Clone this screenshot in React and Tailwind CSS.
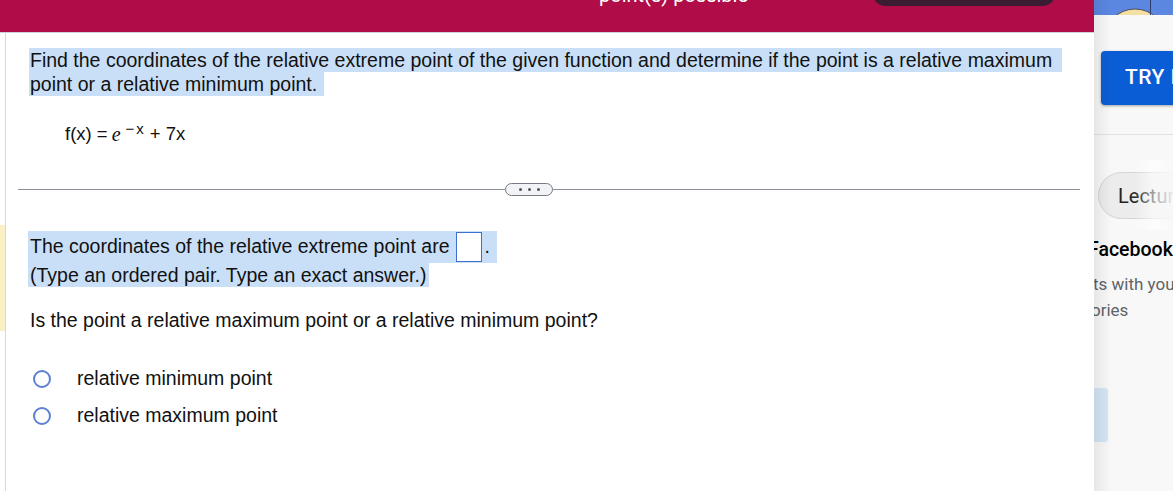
import React from "react";

const sans = { fontFamily: '"Liberation Sans", Arial, sans-serif' };
const roboto = { fontFamily: 'Roboto, "Liberation Sans", sans-serif' };

function Radio({ label }) {
  return (
    <div className="flex items-center h-[30px]">
      <span className="ml-[4px] w-[18px] h-[18px] rounded-full border-2 border-[#5d7fd3] bg-white shrink-0" />
      <span className="ml-[26px] text-[19.5px] text-[#111]">{label}</span>
    </div>
  );
}

export default function App() {
  return (
    <div className="flex w-[1173px] h-[491px] overflow-hidden bg-white" style={sans}>
      {/* main area */}
      <div className="w-[1094px] shrink-0 flex flex-col">
        <header className="h-[32px] bg-[#b00c48] flex items-start shrink-0 overflow-hidden">
          <span className="ml-[599px] -mt-[15px] text-[20px] leading-[20px] text-white whitespace-nowrap" style={roboto}>
            point(s) possible
          </span>
          <span className="ml-[124px] -mt-[24px] w-[184px] h-[30px] rounded-[14px] bg-[#3a1c33] shrink-0" />
        </header>
        <div className="h-px bg-[#cdd3de]" />
        <div className="flex-1 flex">
          {/* left gutter */}
          <div className="w-[5px] flex flex-col">
            <div className="h-[192px]" />
            <div className="h-[106px] bg-[#fbefc6]" />
          </div>
          <div className="w-px bg-[#d5d9e2]" />
          <div className="flex-1 flex flex-col text-[#111]">
            <div className="mt-[15px] ml-[23px] text-[19.5px] leading-[24px]">
              <div className="w-fit bg-[#c9dff7] pl-px pr-[10px] whitespace-nowrap">
                Find the coordinates of the relative extreme point of the given function and determine if the point is a relative maximum
              </div>
              <div className="w-fit bg-[#c9dff7] pl-px pr-[7px]">point or a relative minimum point.</div>
            </div>
            <div className="mt-[24px] ml-[59px] h-[26px] flex items-end text-[18.5px] leading-[24px]">
              <span>f(x) = </span>
              <span className="ml-[4px] italic text-[20px]" style={{ fontFamily: '"Liberation Serif", serif' }}>e</span>
              <span className="ml-[5px] mb-[10px] text-[15px] leading-[15px] flex gap-[2px]">
                <span>−</span>
                <span>x</span>
              </span>
              <span className="ml-[6px]">+ 7x</span>
            </div>
            <div className="mt-[37px] ml-[12px] w-[1062px] h-[12px] flex items-center">
              <div className="w-[487px] h-px bg-[#8a8f99]" />
              <div className="w-[48px] h-[13px] rounded-full border-[1.5px] border-[#767b85] bg-[#f1f3f6] flex items-center justify-center gap-[6px]">
                <span className="w-[3px] h-[3px] rounded-full bg-[#555]" />
                <span className="w-[3px] h-[3px] rounded-full bg-[#555]" />
                <span className="w-[3px] h-[3px] rounded-full bg-[#555]" />
              </div>
              <div className="flex-1 h-px bg-[#8a8f99]" />
            </div>
            <div className="mt-[36px] ml-[22px] text-[19.5px]">
              <div className="w-fit h-[32px] bg-[#c9dff7] flex items-center pl-[2px] pr-[7px] whitespace-nowrap">
                <span>The coordinates of the relative extreme point are</span>
                <span className="ml-[7px] w-[26px] h-[30px] border-[1.5px] border-[#3c6fcf] bg-white shrink-0" />
                <span className="ml-[2px]">.</span>
              </div>
              <div className="w-fit h-[24px] leading-[24px] bg-[#c9dff7] pl-[2px] pr-[3px] whitespace-nowrap">
                (Type an ordered pair. Type an exact answer.)
              </div>
            </div>
            <div className="mt-[21px] ml-[24px] text-[19.5px] leading-[24px]">
              Is the point a relative maximum point or a relative minimum point?
            </div>
            <div className="mt-[32px] ml-[23px] flex flex-col gap-[7px]">
              <Radio label="relative minimum point" />
              <Radio label="relative maximum point" />
            </div>
          </div>
        </div>
      </div>

      {/* right panel */}
      <aside className="flex-1 relative bg-[#f8f8f8] overflow-hidden flex flex-col" style={roboto}>
        <div className="h-[15px] bg-[#5b87e1] shrink-0 relative overflow-hidden">
          <svg width="79" height="15" className="absolute left-0 top-0">
            <circle cx="41" cy="40" r="31" fill="#f4dfa2" stroke="#4a4a60" strokeWidth="1" />
            <line x1="56.5" y1="0" x2="56.5" y2="15" stroke="#2f3d6a" strokeWidth="1" />
          </svg>
        </div>
        <div className="mt-[36px] ml-[7px] w-[120px] h-[54px] rounded-[4px] bg-[#0b5dd6] shadow-[0_1px_3px_rgba(0,0,0,0.35)] flex items-center pl-[24px] shrink-0">
          <span className="text-white text-[21px] font-medium tracking-[0.5px] whitespace-nowrap">TRY IT</span>
        </div>
        <div className="mt-[29px] h-px bg-[#e2e2e2] shrink-0" />
        <div className="mt-[37px] ml-[4px] w-[130px] h-[47px] rounded-full border border-[#d4d4d4] bg-[#ececec] flex items-center pl-[19px] shrink-0">
          <span className="text-[20px] text-[#222] whitespace-nowrap">Lecture</span>
        </div>
        <div className="mt-[19px] -ml-[6px] text-[19.5px] font-medium text-black leading-[24px] whitespace-nowrap">
          Facebook
        </div>
        <div className="mt-[9px] -ml-[1px] text-[17px] text-[#5f6368] leading-[26px] whitespace-nowrap">
          ts with your
        </div>
        <div className="-ml-[3px] text-[17px] text-[#5f6368] leading-[26px] whitespace-nowrap">ories</div>
        <div className="mt-[65px] w-[14px] h-[54px] bg-[#d5e6f5] rounded-r-[3px] shrink-0" />
        <div className="absolute inset-y-0 left-0 w-[18px] bg-gradient-to-r from-[rgba(0,0,0,0.07)] to-transparent pointer-events-none" />
        <div className="absolute top-[160px] left-[40px] w-[40px] h-[70px] bg-gradient-to-r from-transparent via-[rgba(255,255,255,0.6)] to-[rgba(248,248,248,0.95)] pointer-events-none" />
      </aside>
    </div>
  );
}
